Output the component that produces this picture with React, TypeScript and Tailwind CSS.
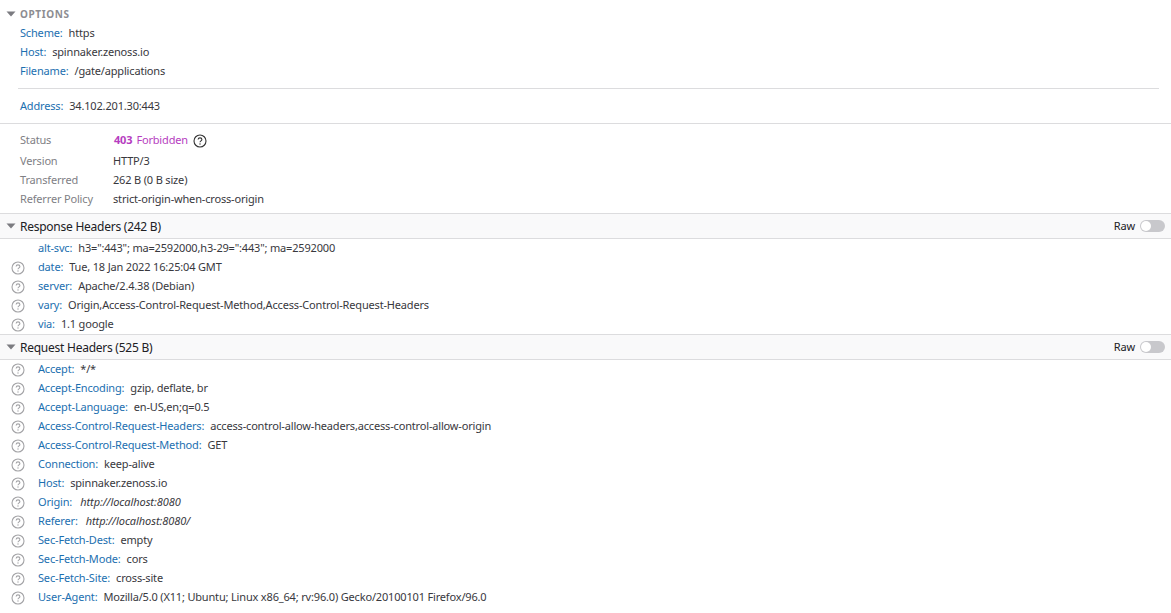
import React from 'react';

const font = "font-['Noto_Sans',sans-serif]";

type Pair = { name: string; value: string; italic?: boolean; noHelp?: boolean };

const responseHeaders: Pair[] = [
  { name: 'alt-svc', value: 'h3=":443"; ma=2592000,h3-29=":443"; ma=2592000', noHelp: true },
  { name: 'date', value: 'Tue, 18 Jan 2022 16:25:04 GMT' },
  { name: 'server', value: 'Apache/2.4.38 (Debian)' },
  { name: 'vary', value: 'Origin,Access-Control-Request-Method,Access-Control-Request-Headers' },
  { name: 'via', value: '1.1 google' },
];

const requestHeaders: Pair[] = [
  { name: 'Accept', value: '*/*' },
  { name: 'Accept-Encoding', value: 'gzip, deflate, br' },
  { name: 'Accept-Language', value: 'en-US,en;q=0.5' },
  { name: 'Access-Control-Request-Headers', value: 'access-control-allow-headers,access-control-allow-origin' },
  { name: 'Access-Control-Request-Method', value: 'GET' },
  { name: 'Connection', value: 'keep-alive' },
  { name: 'Host', value: 'spinnaker.zenoss.io' },
  { name: 'Origin', value: 'http://localhost:8080', italic: true },
  { name: 'Referer', value: 'http://localhost:8080/', italic: true },
  { name: 'Sec-Fetch-Dest', value: 'empty' },
  { name: 'Sec-Fetch-Mode', value: 'cors' },
  { name: 'Sec-Fetch-Site', value: 'cross-site' },
  { name: 'User-Agent', value: 'Mozilla/5.0 (X11; Ubuntu; Linux x86_64; rv:96.0) Gecko/20100101 Firefox/96.0' },
];

const Caret = () => (
  <svg width="10" height="6" viewBox="0 0 10 6" className="shrink-0">
    <path d="M0.5 0.5H9.5L5 5.5Z" fill="#7b7b80" />
  </svg>
);

const HelpIcon = ({ dark }: { dark?: boolean }) => (
  <svg width="14" height="14" viewBox="0 0 14 14" fill="none" className="shrink-0">
    <circle cx="7" cy="7" r="6" stroke={dark ? '#333' : '#a3a3a6'} strokeWidth="1.1" />
    <path
      d="M5.1 5.5C5.2 4.4 6 3.9 7 3.9C8.1 3.9 8.9 4.6 8.9 5.5C8.9 6.8 7 6.9 7 8.3"
      stroke={dark ? '#333' : '#a3a3a6'}
      strokeWidth="1.1"
    />
    <circle cx="7" cy="10" r="0.7" fill={dark ? '#333' : '#a3a3a6'} />
  </svg>
);

const KeyValue = ({ name, value, italic }: Pair) => (
  <span className="whitespace-nowrap">
    <span className="text-[#1c6fb0]">{name}:</span>
    <span className={`text-[#38383d] ${italic ? 'ml-[8px] italic tracking-[-0.06px]' : 'ml-[6px]'}`}>{value}</span>
  </span>
);

const HeaderRow = (p: Pair) => (
  <div className="flex h-[19px] items-center pl-[11px]">
    <div className="w-[27px] shrink-0">{!p.noHelp && <HelpIcon />}</div>
    <KeyValue {...p} />
  </div>
);

const SectionHeader = ({ title }: { title: string }) => (
  <div className="flex h-[26px] items-center border-y border-[#dcdcde] bg-[#f9f9fa] pl-[6px] pr-[6px]">
    <Caret />
    <span className="ml-[4px] pt-[1px] text-[12px] tracking-[-0.25px] text-[#202024]">{title}</span>
    <span className="ml-auto text-[11px] text-[#202024]">Raw</span>
    <div className="ml-[5px] flex h-[12px] w-[25px] items-center rounded-full bg-[#c8c8cc] pl-[1px]">
      <div className="h-[10px] w-[10px] rounded-full bg-white" />
    </div>
  </div>
);

const StatusRow = ({ label, children, className }: { label: string; children: React.ReactNode; className?: string }) => (
  <div className={`flex h-[19px] items-center pl-[20px] ${className ?? ''}`}>
    <span className="w-[93px] shrink-0 text-[#808085]">{label}</span>
    {children}
  </div>
);

export default function App() {
  return (
    <div className={`${font} h-[613px] w-[1171px] overflow-hidden bg-white text-[11px] tracking-[-0.17px] text-[#38383d]`}>
      <div className="flex h-[19px] items-center pl-[6px] pt-[9px]">
        <Caret />
        <span className="ml-[4px] text-[10px] font-bold tracking-[0.6px] text-[#8d8d92]">OPTIONS</span>
      </div>
      <div className="mt-[5px] pl-[20px]">
        <div className="flex h-[19px] items-center"><KeyValue name="Scheme" value="https" /></div>
        <div className="flex h-[19px] items-center"><KeyValue name="Host" value="spinnaker.zenoss.io" /></div>
        <div className="flex h-[19px] items-center"><KeyValue name="Filename" value="/gate/applications" /></div>
      </div>
      <div className="ml-[18px] mr-[12px] mt-[7px] border-t border-[#dcdcde]" />
      <div className="mt-[8px] flex h-[19px] items-center pl-[20px]"><KeyValue name="Address" value="34.102.201.30:443" /></div>
      <div className="mt-[7px] border-t border-[#dcdcde]" />
      <StatusRow label="Status" className="mt-[7px]">
        <span className="ml-[1px] font-bold text-[#b63dc0]">403</span>
        <span className="ml-[4px] text-[#b63dc0]">Forbidden</span>
        <span className="ml-[5px]"><HelpIcon dark /></span>
      </StatusRow>
      <StatusRow label="Version" className="mt-[2px]"><span>HTTP/3</span></StatusRow>
      <StatusRow label="Transferred"><span>262 B (0 B size)</span></StatusRow>
      <StatusRow label="Referrer Policy"><span>strict-origin-when-cross-origin</span></StatusRow>
      <div className="mt-[4px]">
        <SectionHeader title="Response Headers (242 B)" />
      </div>
      <div>
        {responseHeaders.map((h) => <HeaderRow key={h.name} {...h} />)}
      </div>
      <div>
        <SectionHeader title="Request Headers (525 B)" />
      </div>
      <div>
        {requestHeaders.map((h) => <HeaderRow key={h.name} {...h} />)}
      </div>
    </div>
  );
}
